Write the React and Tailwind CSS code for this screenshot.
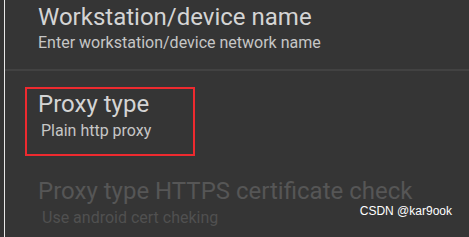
import React from 'react'

const Row = ({ title, summary, disabled, summaryClass }) => (
  <div>
    <p className={`text-[24px] leading-[28px] ${disabled ? 'text-[#565656]' : 'text-[#d4d4d4]'}`}>{title}</p>
    <p className={`text-[16px] leading-[18px] ${summaryClass} ${disabled ? 'text-[#505050]' : 'text-[#c6c6c6]'}`}>{summary}</p>
  </div>
)

export default function App() {
  return (
    <div className="w-[469px] h-[237px] bg-[#353535] flex overflow-hidden" style={{ fontFamily: 'Roboto, "Liberation Sans", sans-serif' }}>
      <div className="w-[4px] bg-[#333333]"></div>
      <div className="w-[1px] bg-[#e8e8e8]"></div>
      <div className="flex-1 flex flex-col">
        <div className="h-[69px] pl-[33px] pt-[3px]">
          <Row title="Workstation/device name" summary="Enter workstation/device network name" summaryClass="mt-[3px]" />
        </div>
        <div className="h-[2px] bg-[#424242]"></div>
        <div className="pl-[20px] pt-[16px]">
          <div className="w-[170px] border-2 border-[#ee2a2f] pl-[11px] pt-[1px] pb-[14px]">
            <Row title="Proxy type" summary="Plain http proxy" summaryClass="mt-[4px] ml-[3px]" />
          </div>
        </div>
        <div className="pl-[33px] pt-[21px] relative">
          <Row title="Proxy type HTTPS certificate check" summary="Use android cert cheking" disabled summaryClass="mt-[4px] ml-[4px]" />
          <span className="absolute right-[17px] bottom-[10px] text-[12px] leading-none text-white" style={{ fontFamily: '"Liberation Sans", Arial, sans-serif' }}>CSDN @kar9ook</span>
        </div>
      </div>
    </div>
  )
}
